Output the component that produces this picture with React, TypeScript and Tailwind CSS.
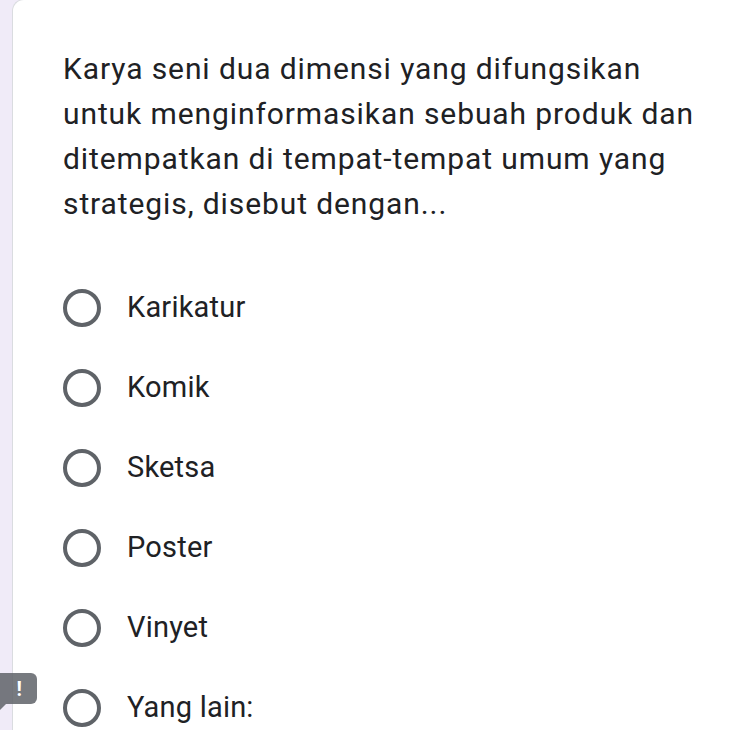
const options = ['Karikatur', 'Komik', 'Sketsa', 'Poster', 'Vinyet', 'Yang lain:'];

function Radio() {
  return <span className="block h-[38px] w-[38px] shrink-0 rounded-full border-[4px] border-[#5f6368]" />;
}

export default function App() {
  return (
    <main className="relative h-[730px] w-full overflow-hidden bg-[#f0ebf8] pl-[12px] font-['Roboto',sans-serif] text-[#202124]">
      <div className="-mt-px h-[731px] rounded-tl-[12px] border-l border-t border-[#dadce0] bg-white pl-[50px] pt-[46px]">
        <p className="w-[650px] text-[30px] leading-[45px] tracking-[0.9px]">
          Karya seni dua dimensi yang difungsikan untuk menginformasikan sebuah produk dan ditempatkan di tempat-tempat umum yang strategis, disebut dengan...
        </p>

        <ul className="mt-[42px]">
          {options.map((o) => (
            <li key={o} className="flex h-[80px] items-center gap-[26px]">
              <Radio />
              <span className="text-[29px] tracking-[0.2px]">{o}</span>
            </li>
          ))}
        </ul>
      </div>

      {/* error badge */}
      <div className="absolute left-0 top-[673px] flex h-[31px] w-[37px] items-center justify-end rounded-r-[6px] bg-[#5f6368]/85 pr-[15px]">
        <span className="text-[20px] font-bold leading-none text-white">!</span>
        <span className="absolute bottom-[-6px] left-0 h-0 w-0 border-r-[6px] border-t-[6px] border-r-transparent border-t-[#5f6368]/85" />
      </div>
    </main>
  );
}
